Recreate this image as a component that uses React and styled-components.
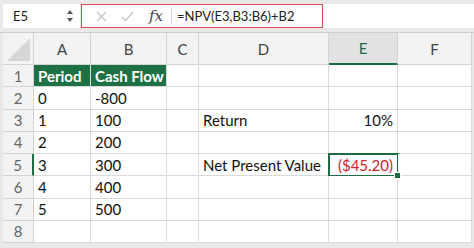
import React from 'react'
import styled, { createGlobalStyle } from 'styled-components'

const GlobalStyle = createGlobalStyle`
  html, body { margin: 0; padding: 0; background: #e9e9e9; }
  body { font-family: Lato, "Open Sans", sans-serif; }
`

const columns = ['A', 'B', 'C', 'D', 'E', 'F']
const widths = [31, 57, 76, 32, 130, 69, 74]

const rows = [
  { a: 'Period', b: 'Cash Flow', head: true },
  { a: '0', b: '-800' },
  { a: '1', b: '100', d: 'Return', e: '10%' },
  { a: '2', b: '200' },
  { a: '3', b: '300', d: 'Net Present Value', e: '($45.20)', selected: true },
  { a: '4', b: '400' },
  { a: '5', b: '500' },
  { a: '' , b: '' },
]

const App = () => {
  return (
    <Page>
      <GlobalStyle />
      <FormulaBar>
        <NameBox>
          <span>E5</span>
          <Spinner>
            <svg width="8" height="14" viewBox="0 0 8 14">
              <path d="M1 5 L4 1 L7 5 Z" fill="#555" />
              <path d="M1 9 L4 13 L7 9 Z" fill="#555" />
            </svg>
          </Spinner>
        </NameBox>
        <FormulaBox>
          <Tool>
            <svg width="11" height="11" viewBox="0 0 11 11">
              <path d="M1 1 L10 10 M10 1 L1 10" stroke="#c4c4c4" strokeWidth="1.3" />
            </svg>
          </Tool>
          <Tool>
            <svg width="13" height="11" viewBox="0 0 13 11">
              <path d="M1 6 L4.5 9.5 L12 1" stroke="#c4c4c4" strokeWidth="1.3" fill="none" />
            </svg>
          </Tool>
          <Fx>fx</Fx>
          <Formula>=NPV(E3,B3:B6)+B2</Formula>
        </FormulaBox>
        <FormulaRest />
      </FormulaBar>
      <Sheet>
        <Corner>
          <svg width="26" height="26" viewBox="0 0 26 26">
            <path d="M25 2 L25 25 L2 25 Z" fill="#d6d6d6" />
          </svg>
        </Corner>
        {columns.map((c) => (
          <ColHead key={c} $active={c === 'E'}>{c}</ColHead>
        ))}
        {rows.map((r, i) => (
          <React.Fragment key={i}>
            <RowHead $active={r.selected}>{i + 1}</RowHead>
            <Cell $head={r.head}>{r.a}</Cell>
            <Cell $head={r.head}>{r.b}</Cell>
            <Cell />
            <Cell>{r.d}</Cell>
            <Cell $right $selected={r.selected}>
              {r.e}
              {r.selected && <Handle />}
            </Cell>
            <Cell />
          </React.Fragment>
        ))}
      </Sheet>
    </Page>
  )
}

export default App

const Page = styled.div`
width: 474px;
height: 248px;
overflow: hidden;
background: #e9e9e9;
`
const FormulaBar = styled.div`
display: flex;
align-items: center;
height: 33px;
padding-left: 3px;
border-bottom: 1px solid #cfcfcf;
box-sizing: border-box;
`
const NameBox = styled.div`
width: 77px;
height: 24px;
background: #fff;
display: flex;
align-items: center;
justify-content: space-between;
padding: 0 6px 0 10px;
box-sizing: border-box;
font-size: 13px;
color: #222;
margin-right: 1px;
`
const Spinner = styled.span`
display: flex;
`
const FormulaBox = styled.div`
width: 242px;
height: 24px;
border: 1.5px solid #d44b4b;
background: #fff;
box-sizing: border-box;
display: flex;
align-items: center;
padding-left: 14px;
`
const Tool = styled.span`
display: flex;
width: 25px;
`
const Fx = styled.span`
font-family: "DejaVu Serif", "Liberation Serif", serif;
font-style: italic;
font-size: 15px;
color: #444;
padding: 0 8px 0 3px;
border-right: 1px solid #d8d8d8;
line-height: 16px;
margin-right: 5px;
`
const Formula = styled.span`
font-size: 13px;
color: #222;
`
const FormulaRest = styled.div`
flex: 1;
height: 24px;
background: #fff;
`
const Sheet = styled.div`
display: grid;
grid-template-columns: ${widths.map((w) => w + 'px').join(' ')};
grid-template-rows: 32px repeat(8, 22.25px);
margin-left: 3px;
background: #fff;
width: 469px;
`
const Corner = styled.div`
background: #f3f3f3;
border-right: 1px solid #d4d4d4;
border-bottom: 1px solid #d4d4d4;
display: flex;
align-items: flex-end;
justify-content: flex-end;
box-sizing: border-box;
padding: 0 2px 2px 0;
`
const ColHead = styled.div`
background: ${(p) => (p.$active ? '#e2e2e2' : '#f3f3f3')};
color: ${(p) => (p.$active ? '#1e6b41' : '#444')};
border-right: 1px solid #d4d4d4;
border-bottom: ${(p) => (p.$active ? '2px solid #1e6b41' : '1px solid #d4d4d4')};
box-sizing: border-box;
display: flex;
align-items: center;
justify-content: center;
font-size: 15px;
`
const RowHead = styled.div`
background: #f3f3f3;
color: #666;
border-right: ${(p) => (p.$active ? '2px solid #1e6b41' : '1px solid #d4d4d4')};
border-bottom: 1px solid #d4d4d4;
box-sizing: border-box;
display: flex;
align-items: center;
justify-content: center;
font-size: 15px;
`
const Cell = styled.div`
position: relative;
background: ${(p) => (p.$head ? '#1e7145' : '#fff')};
color: ${(p) => (p.$head ? '#fff' : p.$selected ? '#c9252d' : '#111')};
font-weight: ${(p) => (p.$head ? 700 : 400)};
border-right: 1px solid #dadada;
border-bottom: 1px solid #dadada;
box-sizing: border-box;
display: flex;
align-items: center;
justify-content: ${(p) => (p.$right ? 'flex-end' : 'flex-start')};
padding: 0 4px;
font-size: 15px;
white-space: nowrap;
${(p) => p.$selected && `
  outline: 2px solid #1e6b41;
  outline-offset: -1px;
`}
`
const Handle = styled.span`
position: absolute;
right: -4px;
bottom: -4px;
width: 5px;
height: 5px;
background: #1e6b41;
border: 1px solid #fff;
z-index: 2;
`
